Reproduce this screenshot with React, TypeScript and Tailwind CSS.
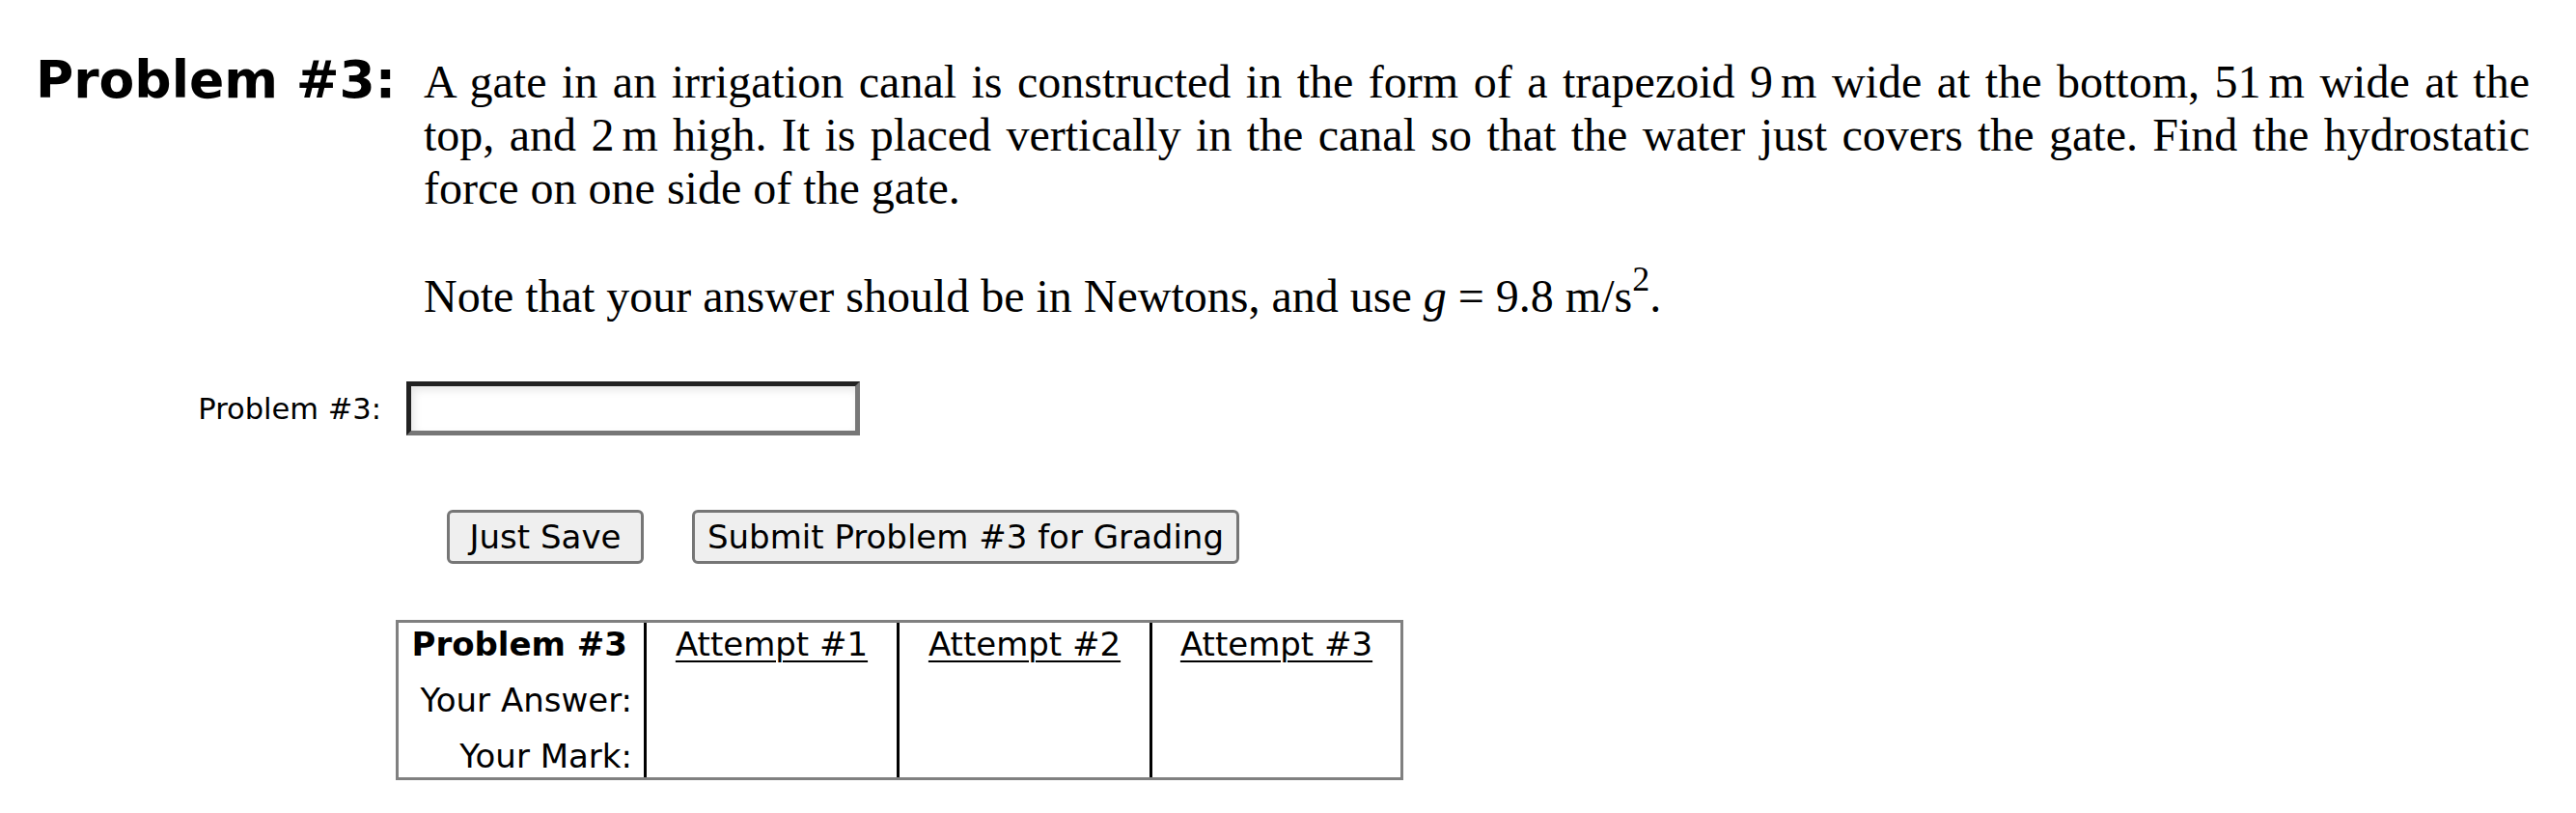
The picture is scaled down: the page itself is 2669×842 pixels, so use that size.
export default function App() {
  const sans = "font-['DejaVu_Sans',Verdana,sans-serif]";
  return (
    <div className="w-[2669px] h-[842px] bg-white text-black overflow-hidden">
      <div className="flex items-baseline pt-[55px] pl-[37px]">
        <div className={`w-[402px] shrink-0 ${sans} font-bold text-[53.5px] leading-[55px]`}>Problem #3:</div>
        <div className="w-[2182px] font-['Liberation_Serif','Times_New_Roman',serif] text-[48px] leading-[55px]">
          <div className="text-justify [text-align-last:justify]">
            A gate in an irrigation canal is constructed in the form of a trapezoid{" "}
            <span className="whitespace-nowrap">9<span className="ml-[8px]">m</span></span> wide at the bottom,{" "}
            <span className="whitespace-nowrap">51<span className="ml-[8px]">m</span></span> wide at the
          </div>
          <div className="text-justify [text-align-last:justify]">
            top, and <span className="whitespace-nowrap">2<span className="ml-[8px]">m</span></span> high. It is placed
            vertically in the canal so that the water just covers the gate. Find the hydrostatic
          </div>
          <div>force on one side of the gate.</div>
          <div className="mt-[57px]">
            Note that your answer should be in Newtons, and use <span className="italic">g</span> = 9.8 m/s
            <sup className="text-[36px] top-[-0.6em]">2</sup>.
          </div>
        </div>
      </div>

      <div className={`flex items-center mt-[61px] ${sans}`}>
        <div className="w-[395px] text-right text-[30.5px] leading-[35px]">Problem #3:</div>
        <div className="ml-[26px] w-[470px] h-[56px] border-[5px] border-solid border-t-[#222222] border-l-[#222222] border-b-[#777777] border-r-[#777777] bg-white shadow-[inset_3px_4px_8px_rgba(0,0,0,0.10)]" />
      </div>

      <div className={`flex gap-[50px] mt-[77px] pl-[463px] ${sans} text-[34px]`}>
        <div className="w-[204px] h-[56px] flex items-center justify-center border-[3px] border-[#767676] rounded-[6px] bg-[#efefef]">
          Just Save
        </div>
        <div className="w-[567px] h-[56px] flex items-center justify-center border-[3px] border-[#767676] rounded-[6px] bg-[#efefef]">
          Submit Problem #3 for Grading
        </div>
      </div>

      <div className={`mt-[58px] ml-[410px] w-[1044px] h-[166px] border-[3px] border-[#808080] flex ${sans} text-[34px] leading-[38px]`}>
        <div className="w-[257px] shrink-0 border-r-[3px] border-black flex flex-col gap-[20px] py-[3px] text-right">
          <div className="pr-[17px] font-bold">Problem #3</div>
          <div className="pr-[12px]">Your Answer:</div>
          <div className="pr-[12px]">Your Mark:</div>
        </div>
        <div className="w-[262px] shrink-0 border-r-[3px] border-black py-[3px] text-center">
          <span className="underline decoration-[2px] underline-offset-[5px]">Attempt #1</span>
        </div>
        <div className="w-[262px] shrink-0 border-r-[3px] border-black py-[3px] text-center">
          <span className="underline decoration-[2px] underline-offset-[5px]">Attempt #2</span>
        </div>
        <div className="flex-1 py-[3px] text-center">
          <span className="underline decoration-[2px] underline-offset-[5px]">Attempt #3</span>
        </div>
      </div>
    </div>
  );
}
